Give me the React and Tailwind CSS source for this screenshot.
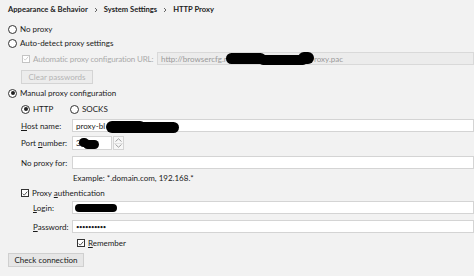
import React from "react";

const Radio = ({ checked }) => (
  <span className="flex items-center justify-center w-[9px] h-[9px] rounded-full border border-[#333] bg-white shrink-0">
    {checked && <span className="w-[4px] h-[4px] rounded-full bg-[#222]" />}
  </span>
);

const Check = ({ disabled }) => (
  <span
    className={`flex items-center justify-center w-[8px] h-[8px] border shrink-0 bg-white ${
      disabled ? "border-[#c4c4c4]" : "border-[#333]"
    }`}
  >
    <svg width="7" height="7" viewBox="0 0 8 8">
      <path
        d="M1 4.2 L3 6.2 L7 1.5"
        fill="none"
        stroke={disabled ? "#bdbdbd" : "#222"}
        strokeWidth="1"
      />
    </svg>
  </span>
);

const Chevron = () => (
  <svg width="4" height="6" viewBox="0 0 4 6" className="mx-[6px] shrink-0">
    <path d="M1 1 L3 3 L1 5" fill="none" stroke="#555" strokeWidth="0.9" />
  </svg>
);

const U = ({ children }) => <span className="underline underline-offset-1">{children}</span>;

const Blob = ({ className }) => <span className={`absolute bg-black rounded-full ${className}`} />;

export default function App() {
  return (
    <div
      className="w-[474px] h-[276px] bg-[#f2f2f2] overflow-hidden text-[8px] text-[#1a1a1a] leading-none whitespace-nowrap"
      style={{ fontFamily: 'Lato, "Noto Sans", sans-serif' }}
    >
      <div className="flex items-center h-[20px] pl-[8px] font-bold text-[7.6px] text-[#222]">
        <span>Appearance &amp; Behavior</span>
        <Chevron />
        <span>System Settings</span>
        <Chevron />
        <span>HTTP Proxy</span>
      </div>

      <div className="flex items-center gap-[3px] h-[14px] mt-[2px] pl-[8px]">
        <Radio />
        <span>No proxy</span>
      </div>
      <div className="flex items-center gap-[3px] h-[14px] pl-[8px]">
        <Radio />
        <span>Auto-detect proxy settings</span>
      </div>

      <div className="flex items-center h-[13px] mt-[2px] pl-[22px]">
        <Check disabled />
        <span className="ml-[3px] w-[124px] shrink-0 text-[#aaa] tracking-[-0.15px]">Automatic proxy configuration URL:</span>
        <div className="relative flex-1 h-[13px] bg-[#ececec] border border-[#d9d9d9] flex items-center pl-[3px] text-[#9a9a9a]">
          <span>http://browsercfg.r</span>
          <span className="absolute left-[156px]">roxy.pac</span>
          <Blob className="left-[68px] top-[0px] w-[40px] h-[11px]" />
          <Blob className="left-[100px] top-[2px] w-[50px] h-[10px]" />
          <Blob className="left-[140px] top-[-1px] w-[16px] h-[12px]" />
        </div>
      </div>

      <div className="pl-[21px] mt-[5px]">
        <div className="flex items-center justify-center w-[72px] h-[14px] border border-[#d4d4d4] bg-[#ececec] text-[#b4b4b4]">
          Clear passwords
        </div>
      </div>

      <div className="flex items-center gap-[3px] h-[14px] mt-[2px] pl-[8px]">
        <Radio checked />
        <span>Manual proxy configuration</span>
      </div>

      <div className="flex items-center h-[14px] mt-[2px] pl-[21px]">
        <Radio checked />
        <span className="ml-[3px] w-[37px]">HTTP</span>
        <Radio />
        <span className="ml-[3px]">SOCKS</span>
      </div>

      <div className="flex items-center h-[13px] mt-[3px] pl-[21px]">
        <span className="w-[51px] shrink-0">
          <U>H</U>ost name:
        </span>
        <div className="relative flex-1 h-[13px] bg-white border border-[#d4d4d4] flex items-center pl-[3px]">
          <span>proxy-bl</span>
          <Blob className="left-[33px] top-[1px] w-[40px] h-[12px]" />
          <Blob className="left-[60px] top-[2px] w-[46px] h-[11px]" />
        </div>
      </div>

      <div className="flex items-center h-[14px] mt-[4px] pl-[21px]">
        <span className="w-[51px] shrink-0">
          Port <U>n</U>umber:
        </span>
        <div className="relative w-[40px] h-[14px] bg-white border border-[#d4d4d4] flex items-center pl-[3px]">
          <span>3</span>
          <Blob className="left-[6px] top-[1px] w-[10px] h-[9px]" />
          <Blob className="left-[10px] top-[3px] w-[16px] h-[9px]" />
        </div>
        <div className="flex flex-col w-[11px] h-[14px] ml-[1px] border border-[#d4d4d4] bg-[#f7f7f7]">
          <div className="flex-1 flex items-center justify-center border-b border-[#e2e2e2]">
            <svg width="7" height="4" viewBox="0 0 7 4">
              <path d="M0.5 3.5 L3.5 0.8 L6.5 3.5" fill="none" stroke="#888" strokeWidth="0.8" />
            </svg>
          </div>
          <div className="flex-1 flex items-center justify-center">
            <svg width="7" height="4" viewBox="0 0 7 4">
              <path d="M0.5 0.5 L3.5 3.2 L6.5 0.5" fill="none" stroke="#888" strokeWidth="0.8" />
            </svg>
          </div>
        </div>
      </div>

      <div className="flex items-center h-[13px] mt-[6px] pl-[21px]">
        <span className="w-[51px] shrink-0">No proxy for:</span>
        <div className="flex-1 h-[13px] bg-white border border-[#d4d4d4]" />
      </div>

      <div className="flex items-center h-[12px] mt-[3px] pl-[73px]">
        Example: *.domain.com, 192.168.*
      </div>

      <div className="flex items-center h-[14px] mt-[2px] pl-[21px]">
        <Check />
        <span className="ml-[3px]">
          Proxy <U>a</U>uthentication
        </span>
      </div>

      <div className="flex items-center h-[13px] mt-[1px] pl-[33px]">
        <span className="w-[39px] shrink-0">
          <U>L</U>ogin:
        </span>
        <div className="relative flex-1 h-[13px] bg-white border border-[#d4d4d4]">
          <Blob className="left-[2px] top-[2px] w-[42px] h-[8px]" />
        </div>
      </div>

      <div className="flex items-center h-[13px] mt-[6px] pl-[33px]">
        <span className="w-[39px] shrink-0">
          <U>P</U>assword:
        </span>
        <div className="flex-1 h-[13px] bg-white border border-[#d4d4d4] flex items-center pl-[3px] text-[6px] tracking-[-0.5px]">
          ••••••••••
        </div>
      </div>

      <div className="flex items-center h-[14px] mt-[3px] pl-[77px]">
        <Check />
        <span className="ml-[3px]">
          <U>R</U>emember
        </span>
      </div>

      <div className="pl-[8px] mt-[3px]">
        <div className="flex items-center justify-center w-[76px] h-[14px] border border-[#cfcfcf] bg-[#e6e6e6]">
          Check connection
        </div>
      </div>
    </div>
  );
}
